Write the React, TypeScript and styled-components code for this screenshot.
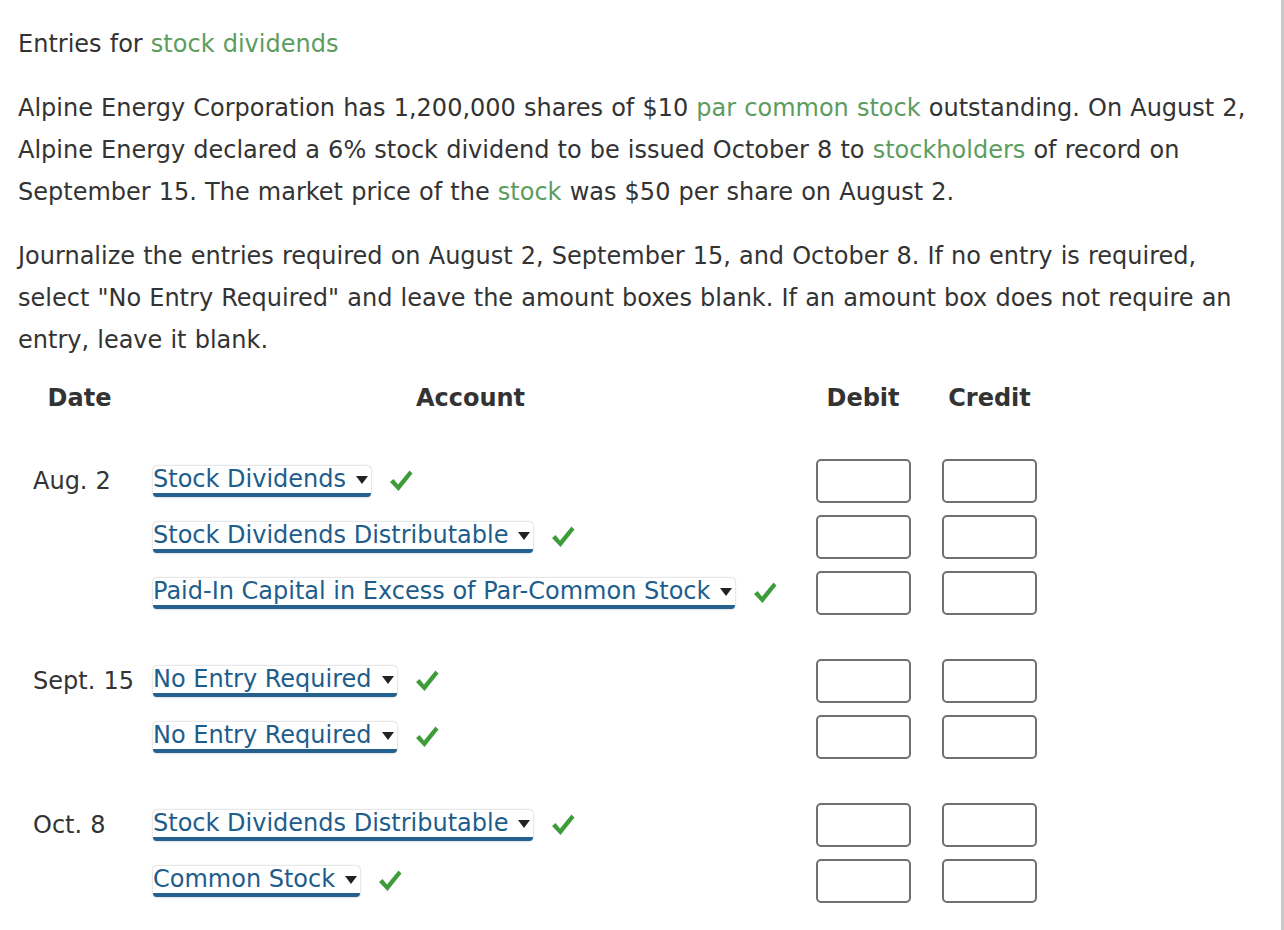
import React from 'react';
import styled, { createGlobalStyle } from 'styled-components';

const Global = createGlobalStyle`
  body {
    margin: 0;
    background: #fff;
    font-family: "DejaVu Sans", Verdana, sans-serif;
    color: #333;
  }
`;

const Page = styled.div`
  padding: 23px 24px 0 18px;
  width: 1284px;
  height: 930px;
  box-sizing: border-box;
  overflow: hidden;
  border-right: 3px solid #c8c8c8;
  font-size: 24px;
  line-height: 42px;
  word-spacing: 0.5px;
`;

const Para = styled.p<{ $gap?: number }>`
  margin: 0 0 ${p => p.$gap ?? 22}px;
`;

const Term = styled.span`
  color: #5c9c5e;
`;

const Table = styled.div`
  display: grid;
  grid-template-columns: 123px 659px 126px 127px;
  align-items: center;
`;

const HeadCell = styled.div`
  font-weight: bold;
  text-align: center;
  height: 42px;
  line-height: 42px;
  margin-bottom: 34px;
`;

const DateCell = styled.div`
  padding-left: 15px;
  height: 56px;
  line-height: 56px;
  white-space: nowrap;
`;

const AccountCell = styled.div`
  padding-left: 12px;
  height: 56px;
  display: flex;
  align-items: center;
  gap: 18px;
`;

const AmountCell = styled.div`
  display: flex;
  justify-content: center;
  align-items: center;
  height: 56px;
`;

const Spacer = styled.div`
  grid-column: 1 / -1;
  height: 32px;
`;

const SelectBox = styled.span`
  display: inline-flex;
  align-items: center;
  gap: 10px;
  height: 27px;
  padding: 0 3px 0 0;
  background: #fff;
  border-radius: 4px;
  box-shadow: 0 0 2px rgba(0, 0, 0, 0.35);
  border-bottom: 4px solid #24618f;
  color: #1d5d8c;
  line-height: 27px;
  white-space: nowrap;
  word-spacing: 0;
`;

const Arrow = styled.span`
  width: 0;
  height: 0;
  border-left: 6px solid transparent;
  border-right: 6px solid transparent;
  border-top: 8px solid #222;
  margin-top: 1px;
`;

const Box = styled.div`
  width: 95px;
  height: 44px;
  box-sizing: border-box;
  border: 2px solid #707070;
  border-radius: 5px;
  background: #fff;
`;

const Check = () => (
  <svg width="24" height="24" viewBox="0 0 24 24">
    <path d="M1 13 L4.5 10 L9 15.5 L20.5 1.5 L23.5 4.5 L9.5 22 Z" fill="#3f9c3b" />
  </svg>
);

type Line = { date?: string; account: string };

const groups: Line[][] = [
  [
    { date: 'Aug. 2', account: 'Stock Dividends' },
    { account: 'Stock Dividends Distributable' },
    { account: 'Paid-In Capital in Excess of Par-Common Stock' },
  ],
  [
    { date: 'Sept. 15', account: 'No Entry Required' },
    { account: 'No Entry Required' },
  ],
  [
    { date: 'Oct. 8', account: 'Stock Dividends Distributable' },
    { account: 'Common Stock' },
  ],
];

const App = () => {
  return (
    <Page>
      <Global />
      <Para>
        Entries for <Term>stock dividends</Term>
      </Para>
      <Para>
        Alpine Energy Corporation has 1,200,000 shares of $10 <Term>par common stock</Term> outstanding. On August 2,
        Alpine Energy declared a 6% stock dividend to be issued October 8 to <Term>stockholders</Term> of record on
        September 15. The market price of the <Term>stock</Term> was $50 per share on August 2.
      </Para>
      <Para $gap={16}>
        Journalize the entries required on August 2, September 15, and October 8. If no entry is required, select "No
        Entry Required" and leave the amount boxes blank. If an amount box does not require an entry, leave it blank.
      </Para>
      <Table>
        <HeadCell>Date</HeadCell>
        <HeadCell>Account</HeadCell>
        <HeadCell>Debit</HeadCell>
        <HeadCell>Credit</HeadCell>
        {groups.map((g, gi) => (
          <React.Fragment key={gi}>
            {gi > 0 && <Spacer />}
            {g.map((l, li) => (
              <React.Fragment key={li}>
                <DateCell>{l.date ?? ''}</DateCell>
                <AccountCell>
                  <SelectBox>
                    {l.account}
                    <Arrow />
                  </SelectBox>
                  <Check />
                </AccountCell>
                <AmountCell>
                  <Box />
                </AmountCell>
                <AmountCell>
                  <Box />
                </AmountCell>
              </React.Fragment>
            ))}
          </React.Fragment>
        ))}
      </Table>
    </Page>
  );
};

export default App;
